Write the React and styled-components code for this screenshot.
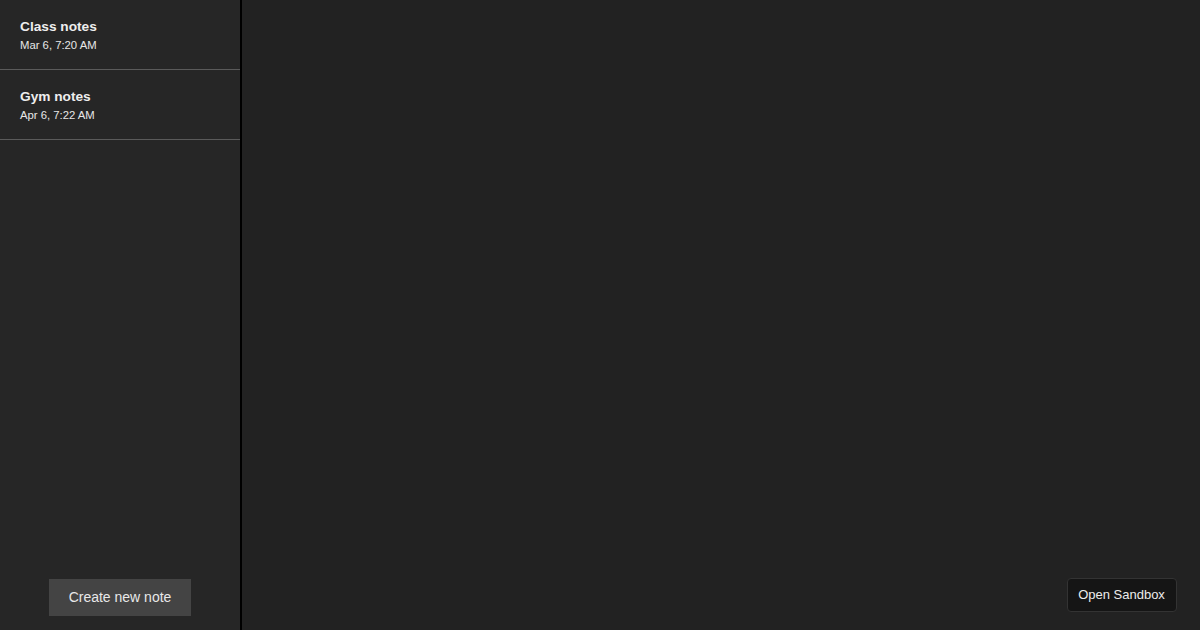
import React from "react";
import styled, { createGlobalStyle } from "styled-components";

const Global = createGlobalStyle`
  html, body { margin: 0; padding: 0; height: 100%; }
  body { background: #222222; font-family: "Liberation Sans", Arial, sans-serif; color: #eeeeee; }
  #root { height: 100%; }
`;

const Layout = styled.div`
  display: flex;
  height: 630px;
  width: 1200px;
`;

const Sidebar = styled.aside`
  width: 240px;
  flex-shrink: 0;
  background: #262626;
  border-right: 2px solid #000;
  display: flex;
  flex-direction: column;
`;

const NoteList = styled.div`
  flex: 1;
  display: flex;
  flex-direction: column;
`;

const NoteItem = styled.div`
  border-bottom: 1px solid #5a5a5a;
  padding: 19px 20px 0;
  box-sizing: border-box;
  height: 70px;
`;

const NoteTitle = styled.div`
  font-size: 13.7px;
  font-weight: bold;
  color: #eeeeee;
  line-height: 16px;
`;

const NoteDate = styled.div`
  font-size: 11.3px;
  color: #e6e6e6;
  line-height: 13px;
  margin-top: 4px;
`;

const Footer = styled.div`
  display: flex;
  justify-content: center;
  padding-bottom: 14px;
`;

const CreateButton = styled.button`
  background: #444444;
  color: #e8e8e8;
  border: none;
  width: 142px;
  height: 37px;
  font-family: "Liberation Sans", Arial, sans-serif;
  font-size: 14px;
  padding: 0 0 2px;
  cursor: pointer;
`;

const Main = styled.main`
  flex: 1;
  background: #222222;
`;

const SandboxButton = styled.button`
  position: fixed;
  right: 23px;
  bottom: 18px;
  width: 110px;
  height: 34px;
  background: #151515;
  color: #ececec;
  border: 1px solid #333;
  border-radius: 4px;
  font-family: "Liberation Sans", Arial, sans-serif;
  font-size: 13px;
  padding: 0 1px 1px 0;
`;

const notes = [
  { title: "Class notes", date: "Mar 6, 7:20 AM" },
  { title: "Gym notes", date: "Apr 6, 7:22 AM" },
];

export default function App() {
  return (
    <>
      <Global />
      <Layout>
        <Sidebar>
          <NoteList>
            {notes.map((n) => (
              <NoteItem key={n.title}>
                <NoteTitle>{n.title}</NoteTitle>
                <NoteDate>{n.date}</NoteDate>
              </NoteItem>
            ))}
          </NoteList>
          <Footer>
            <CreateButton>Create new note</CreateButton>
          </Footer>
        </Sidebar>
        <Main />
      </Layout>
      <SandboxButton>Open Sandbox</SandboxButton>
    </>
  );
}
